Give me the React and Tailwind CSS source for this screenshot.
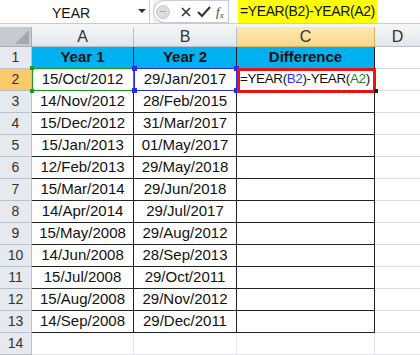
import React from "react";

const rows = [
  ["15/Oct/2012", "29/Jan/2017"],
  ["14/Nov/2012", "28/Feb/2015"],
  ["15/Dec/2012", "31/Mar/2017"],
  ["15/Jan/2013", "01/May/2017"],
  ["12/Feb/2013", "29/May/2018"],
  ["15/Mar/2014", "29/Jun/2018"],
  ["14/Apr/2014", "29/Jul/2017"],
  ["15/May/2008", "29/Aug/2012"],
  ["14/Jun/2008", "28/Sep/2013"],
  ["15/Jul/2008", "29/Oct/2011"],
  ["15/Aug/2008", "29/Nov/2012"],
  ["14/Sep/2008", "29/Dec/2011"],
];

const font = { fontFamily: '"Liberation Sans", Arial, sans-serif' };

function RowHead({ n, active }) {
  return (
    <div
      className={
        "w-[32px] shrink-0 flex items-center justify-center text-[14px] text-[#333] border-r border-b border-[#b8c0cc] " +
        (active ? "bg-[#f8ca6a]" : "bg-[#e6e9ee]")
      }
    >
      {n}
    </div>
  );
}

export default function App() {
  return (
    <div className="w-[420px] h-[355px] overflow-hidden bg-white relative" style={font}>
      {/* formula bar */}
      <div className="h-[24px] flex items-stretch bg-[#eef0f3] border-b border-[#c8ccd2]">
        <div className="w-[150px] bg-white border-r border-[#c8ccd2] flex items-center relative">
          <span className="absolute left-[52px] top-[3px] text-[14px] text-[#111]">YEAR</span>
          <span className="absolute left-[138px] top-[9px] w-0 h-0 border-l-[4px] border-r-[4px] border-t-[4px] border-l-transparent border-r-transparent border-t-[#333]"></span>
        </div>
        <div className="w-[3px] bg-white"></div>
        <div className="flex items-center bg-white rounded-l-[12px] border border-[#c8ccd2] border-r-0 pl-[2px] w-[75px]">
          <div className="w-[14px] h-[14px] rounded-full bg-[#dcdde0] border border-[#c4c6ca] flex items-center justify-center">
            <div className="w-[6px] h-[1px] bg-[#aaa]"></div>
          </div>
          <svg width="12" height="12" viewBox="0 0 12 12" className="ml-[10px]">
            <path d="M2 2L10 10M10 2L2 10" stroke="#333" strokeWidth="1.6" />
          </svg>
          <svg width="14" height="12" viewBox="0 0 14 12" className="ml-[5px]">
            <path d="M1 6L5 10L13 1" stroke="#333" strokeWidth="2" fill="none" />
          </svg>
          <span className="ml-[5px] text-[13px] italic text-[#444]" style={{ fontFamily: '"Liberation Serif", serif' }}>
            f<sub className="text-[9px]">x</sub>
          </span>
        </div>
        <div className="flex-1 bg-white border-l border-[#c8ccd2] flex items-stretch">
          <span className="ml-[9px] bg-[#ffff00] text-[14px] tracking-[-0.4px] text-[#111] px-[2px] flex items-center">=YEAR(B2)-YEAR(A2)</span>
        </div>
      </div>
      <div className="h-[3px] bg-[#f4f5f7]"></div>

      {/* column headers */}
      <div className="flex h-[20px]">
        <div className="w-[32px] shrink-0 bg-[#c7cad0] border-r border-b border-[#a8adb5] relative">
          <div className="absolute right-[2px] bottom-[2px] w-0 h-0"
            style={{ borderBottom: "14px solid #a3a7ae", borderLeft: "14px solid transparent" }}></div>
        </div>
        <div className="w-[102px] shrink-0 bg-gradient-to-b from-[#f3f5f8] to-[#e2e6ec] border-r border-b border-[#b8c0cc] flex items-center justify-center text-[16px] text-[#333]">A</div>
        <div className="w-[103px] shrink-0 bg-gradient-to-b from-[#f3f5f8] to-[#e2e6ec] border-r border-b border-[#b8c0cc] flex items-center justify-center text-[16px] text-[#333]">B</div>
        <div className="w-[138px] shrink-0 bg-gradient-to-b from-[#fde9b4] to-[#f9d68a] border-r border-b border-[#e0b65a] flex items-center justify-center text-[16px] text-[#333]">C</div>
        <div className="flex-1 bg-gradient-to-b from-[#f3f5f8] to-[#e2e6ec] border-b border-[#b8c0cc] flex items-center justify-center text-[16px] text-[#333]">D</div>
      </div>

      {/* row 1 */}
      <div className="flex h-[22px]">
        <RowHead n={1} />
        <div className="w-[102px] shrink-0 bg-[#00b0f0] border-r border-b border-[#222] flex items-center justify-center text-[15px] font-bold text-[#111]">Year 1</div>
        <div className="w-[103px] shrink-0 bg-[#00b0f0] border-r border-b border-[#222] flex items-center justify-center text-[15px] font-bold text-[#111]">Year 2</div>
        <div className="w-[138px] shrink-0 bg-[#00b0f0] border-r border-b border-[#222] flex items-center justify-center text-[15px] font-bold text-[#111]">Difference</div>
        <div className="flex-1 border-b border-[#dadcdf]"></div>
      </div>

      {rows.map((r, i) => (
        <div className="flex h-[22px]" key={i}>
          <RowHead n={i + 2} active={i === 0} />
          <div className="w-[102px] shrink-0 border-r border-b border-[#222] flex items-center justify-center text-[15px] text-[#111]">{r[0]}</div>
          <div className="w-[103px] shrink-0 border-r border-b border-[#222] flex items-center justify-center text-[15px] text-[#111]">{r[1]}</div>
          <div className="w-[138px] shrink-0 border-r border-b border-[#222] flex items-center pl-[3px] text-[13.5px] tracking-[-0.4px] text-[#111] whitespace-nowrap">
            {i === 0 ? (
              <span>
                =YEAR(<span className="text-[#3333ee]">B2</span>)-YEAR(<span className="text-[#1c8c1c]">A2</span>)
              </span>
            ) : null}
          </div>
          <div className="flex-1 border-b border-[#dadcdf]"></div>
        </div>
      ))}

      <div className="flex h-[22px]">
        <RowHead n={14} />
        <div className="w-[102px] shrink-0 border-r border-b border-[#e3e5e8]"></div>
        <div className="w-[103px] shrink-0 border-r border-b border-[#e3e5e8]"></div>
        <div className="w-[138px] shrink-0 border-r border-b border-[#e3e5e8]"></div>
        <div className="flex-1 border-b border-[#e3e5e8]"></div>
      </div>

      {/* selection overlays */}
      <div className="absolute left-[32px] top-[68px] w-[102px] h-[23px] border-[1.5px] border-[#1a9a1a]">
        <div className="absolute -left-[3px] -top-[3px] w-[4px] h-[4px] bg-[#1a9a1a]"></div>
        <div className="absolute -right-[3px] -top-[3px] w-[4px] h-[4px] bg-[#1a9a1a]"></div>
        <div className="absolute -left-[3px] -bottom-[3px] w-[4px] h-[4px] bg-[#1a9a1a]"></div>
        <div className="absolute -right-[3px] -bottom-[3px] w-[4px] h-[4px] bg-[#1a9a1a]"></div>
      </div>
      <div className="absolute left-[134px] top-[68px] w-[103px] h-[23px] border-[1.5px] border-[#2b2bee]">
        <div className="absolute -left-[3px] -top-[3px] w-[5px] h-[5px] bg-[#2b2bee]"></div>
        <div className="absolute -right-[3px] -top-[3px] w-[5px] h-[5px] bg-[#2b2bee]"></div>
        <div className="absolute -left-[3px] -bottom-[3px] w-[5px] h-[5px] bg-[#2b2bee]"></div>
        <div className="absolute -right-[3px] -bottom-[3px] w-[5px] h-[5px] bg-[#2b2bee]"></div>
      </div>
      <div className="absolute left-[237px] top-[68px] w-[139px] h-[25px] border-[3px] border-[#ee1111]"></div>
      <div className="absolute left-[374px] top-[89px] w-[4px] h-[4px] bg-[#222]"></div>
    </div>
  );
}
